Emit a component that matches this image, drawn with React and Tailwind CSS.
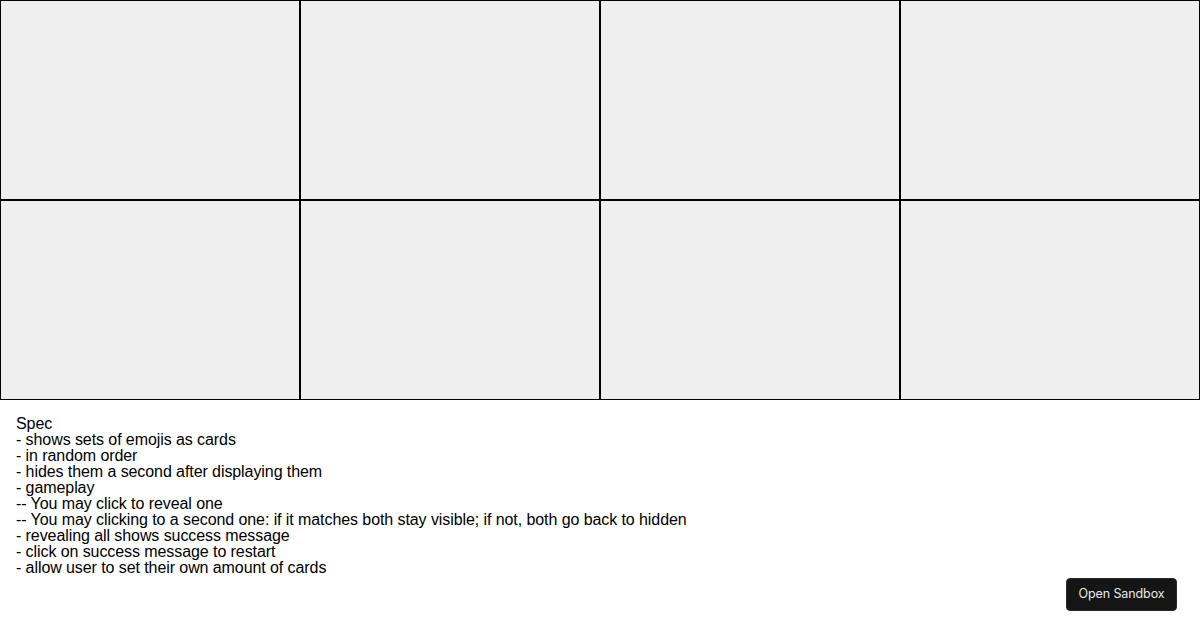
const cards = Array.from({ length: 8 }, (_, i) => i);

const specLines = [
  "Spec",
  "- shows sets of emojis as cards",
  "- in random order",
  "- hides them a second after displaying them",
  "- gameplay",
  "-- You may click to reveal one",
  "-- You may clicking to a second one: if it matches both stay visible; if not, both go back to hidden",
  "- revealing all shows success message",
  "- click on success message to restart",
  "- allow user to set their own amount of cards",
];

export default function App() {
  return (
    <div className="relative h-[630px] w-[1200px] overflow-hidden bg-white font-['Liberation_Sans',Arial,sans-serif] text-black">
      {/* Cards */}
      <div className="grid grid-cols-4">
        {cards.map((c) => (
          <div key={c} className="h-[200px] w-[300px] border border-black bg-[#efefef]" />
        ))}
      </div>

      {/* Spec */}
      <div className="px-4 pt-4 text-base leading-4 tracking-[-0.08px]">
        {specLines.map((line, i) => (
          <div key={i}>{line}</div>
        ))}
      </div>

      {/* Sandbox button */}
      <button className="absolute bottom-[19px] right-[23px] flex h-[33px] w-[111px] items-center justify-center rounded-[4px] border border-[#2a2a2a] bg-[#151515] font-['Inter',sans-serif] text-[12.5px] tracking-[-0.1px] text-[#e8e8e8]">
        Open Sandbox
      </button>
    </div>
  );
}
